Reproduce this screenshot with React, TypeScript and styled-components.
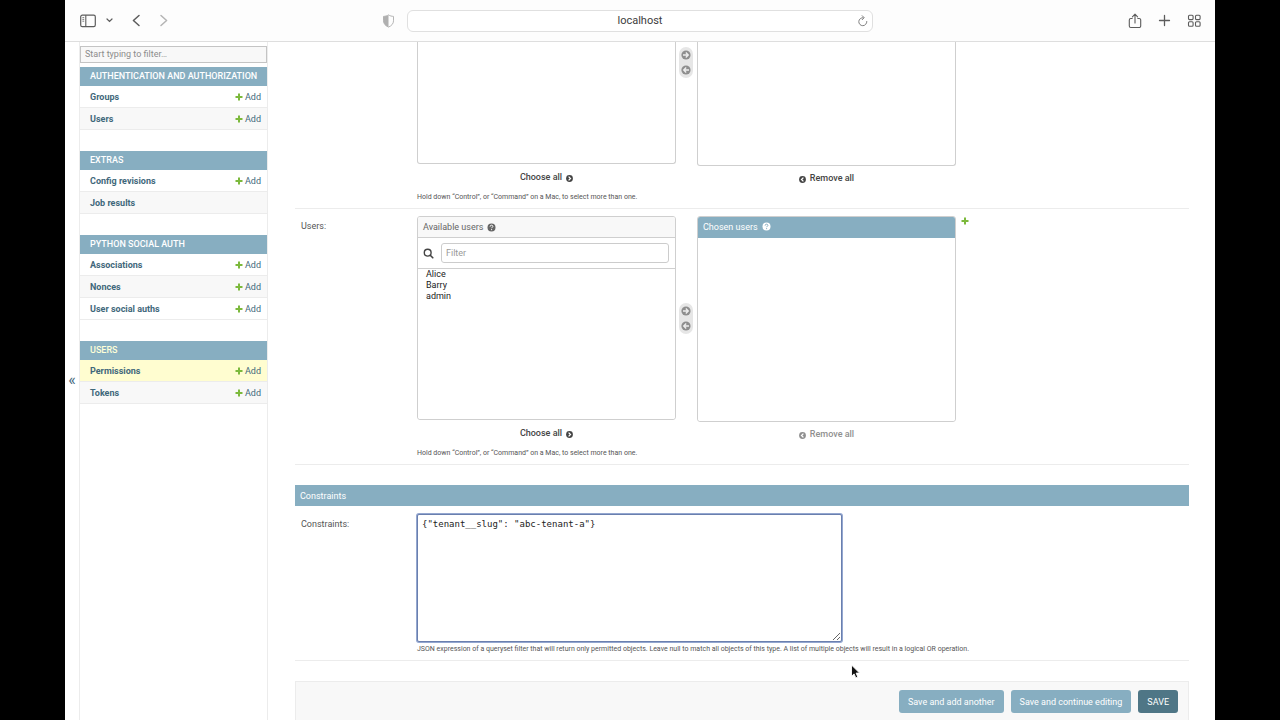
import React from "react";
import styled, { createGlobalStyle, css } from "styled-components";

const colors = {
  accent: "#87aec1",
  accentDark: "#4f7686",
  link: "#3f687b",
  text: "#555",
  line: "#ececec",
  boxLine: "#cfcfcf",
  shade: "#f8f8f8",
  green: "#7cb93c",
};

const GlobalStyle = createGlobalStyle`
  *, *::before, *::after { box-sizing: border-box; }
  html, body, #root { height: 100%; }
  body {
    margin: 0;
    background: #000;
    color: ${colors.text};
    font: 400 9px/12px Roboto, "Liberation Sans", sans-serif;
  }
  button, input, select, textarea { font: inherit; color: inherit; }
  svg { display: block; flex: none; }
`;

/* ---------- browser window ---------- */

const BrowserWindow = styled.div`
  position: relative;
  display: flex;
  flex-direction: column;
  height: 100vh;
  margin: 0 65px;
  background: #fff;
  overflow: hidden;
`;

const Toolbar = styled.header`
  display: grid;
  grid-template-columns: 1fr minmax(200px, 466px) 1fr;
  align-items: center;
  flex: none;
  height: 42px;
  background: #fdfdfd;
  border-bottom: 1px solid #dedede;
`;

const ToolbarSide = styled.div<{ $end?: boolean }>`
  display: flex;
  align-items: center;
  gap: ${(p) => (p.$end ? "16px" : "10px")};
  padding: ${(p) => (p.$end ? "0 14px 0 0" : "0 12px 0 15px")};
  justify-content: ${(p) => (p.$end ? "flex-end" : "flex-start")};
`;

const ToolButton = styled.button<{ $pushed?: boolean; $faint?: boolean }>`
  display: grid;
  place-items: center;
  padding: 0;
  border: 0;
  background: none;
  color: ${(p) => (p.$faint ? "#b4b4b4" : "#5c5c5c")};
  ${(p) => p.$pushed && css`margin-left: auto;`}
`;

const HistoryButtons = styled.div`
  display: flex;
  gap: 18px;
  margin-left: 8px;
`;

const AddressBar = styled.form`
  display: flex;
  align-items: center;
  height: 22px;
  padding: 0 4px 0 14px;
  border: 1px solid #e0e0e0;
  border-radius: 6px;
  background: #fff;
`;

const AddressInput = styled.input`
  flex: 1;
  min-width: 0;
  padding: 1px 0 0;
  border: 0;
  outline: 0;
  background: none;
  color: #3c3c3c;
  font-size: 11px;
  line-height: 20px;
  text-align: center;
`;

/* ---------- page frame ---------- */

const Page = styled.div`
  display: grid;
  grid-template-columns: 14px 189px 1fr;
  flex: 1;
  min-height: 0;
`;

const SidebarToggle = styled.button`
  align-self: center;
  padding: 0 0 4px;
  border: 0;
  background: none;
  color: ${colors.link};
  font-size: 16px;
  line-height: 16px;
`;

const Sidebar = styled.nav`
  padding-top: 4px;
  border: solid ${colors.line};
  border-width: 0 1px;
`;

const NavFilter = styled.input`
  display: block;
  width: 100%;
  height: 17px;
  margin-bottom: 4px;
  padding: 0 4px 1px;
  border: 1px solid #c4c4c4;
  border-radius: 0;
  background: ${colors.shade};
  &::placeholder { color: #8c8c8c; }
`;

const NavGroup = styled.section`
  margin-bottom: 21px;
`;

const NavHeading = styled.h2`
  margin: 0;
  padding: 0 10px;
  background: ${colors.accent};
  color: #fff;
  font-size: 9px;
  font-weight: 500;
  line-height: 19px;
  text-transform: uppercase;
  white-space: nowrap;
`;

const HeadingLink = styled.a<{ $current?: boolean }>`
  color: ${(p) => (p.$current ? "#ffffd8" : "#fff")};
  text-decoration: none;
`;

const NavList = styled.ul`
  margin: 0;
  padding: 0;
  list-style: none;
`;

const NavItem = styled.li<{ $active?: boolean }>`
  display: flex;
  align-items: center;
  justify-content: space-between;
  height: 22px;
  padding: 0 6px 0 10px;
  border-bottom: 1px solid ${colors.line};
  background: #fff;
  &:nth-child(even) { background: ${colors.shade}; }
  ${(p) => p.$active && css`background: #fffdd0;`}
`;

const NavLink = styled.a`
  color: ${colors.link};
  font-weight: 700;
  text-decoration: none;
`;

const AddLink = styled.a`
  display: flex;
  align-items: center;
  gap: 2px;
  color: ${colors.link};
  text-decoration: none;
`;

const Main = styled.main`
  display: flex;
  flex-direction: column;
  min-width: 0;
  padding: 0 26px 0 27px;
`;

/* ---------- form ---------- */

const FormRow = styled.div<{ $top: number }>`
  display: flex;
  align-items: flex-start;
  flex: none;
  padding: ${(p) => p.$top}px 0 5px 6px;
  border-bottom: 1px solid ${colors.line};
`;

const FieldLabel = styled.label`
  flex: none;
  width: 116px;
  padding-top: 4px;
`;

const Field = styled.div`
  min-width: 0;
`;

const Help = styled.p<{ $gap: number }>`
  margin: ${(p) => p.$gap}px 0 0;
  color: #555;
  font-size: 7px;
  line-height: 12px;
`;

const SelectorLine = styled.div`
  display: flex;
  gap: 5px;
`;

const Selector = styled.div`
  display: grid;
  grid-template-columns: 259px 21px 259px;
`;

const SelectorSide = styled.div`
  display: flex;
  flex-direction: column;
`;

const Box = styled.div<{ $height: number; $cut?: boolean }>`
  display: flex;
  flex-direction: column;
  height: ${(p) => p.$height}px;
  border: 1px solid ${colors.boxLine};
  border-radius: ${(p) => (p.$cut ? "0 0 3px 3px" : "3px")};
  ${(p) => p.$cut && css`border-top: 0;`}
  overflow: hidden;
`;

const BoxTitle = styled.h3<{ $chosen?: boolean }>`
  display: flex;
  align-items: center;
  gap: 4px;
  flex: none;
  height: 21px;
  margin: 0;
  padding: 0 5px;
  font-size: 9px;
  font-weight: 400;
  background: ${(p) => (p.$chosen ? colors.accent : colors.shade)};
  color: ${(p) => (p.$chosen ? "#fff" : "#666")};
  border-bottom: 1px solid ${(p) => (p.$chosen ? colors.accent : colors.boxLine)};
  ${(p) => p.$chosen && css`
    margin: -1px -1px 0;
    padding: 0 6px;
    height: 22px;
  `}
`;

const FilterLine = styled.div`
  display: flex;
  align-items: center;
  gap: 7px;
  flex: none;
  height: 31px;
  padding: 0 6px 0 5px;
  border-bottom: 1px solid ${colors.boxLine};
  color: #444;
`;

const FilterInput = styled.input`
  flex: 1;
  min-width: 0;
  height: 20px;
  padding: 0 4px;
  border: 1px solid #ccc;
  border-radius: 3px;
  &::placeholder { color: #999; }
`;

const OptionList = styled.select`
  flex: 1;
  width: 100%;
  min-height: 0;
  padding: 0 7px;
  border: 0;
  outline: 0;
  background: #fff;
  color: #222;
  overflow: hidden;
  option {
    min-height: 0;
    height: 11px;
    padding: 0 1px;
    line-height: 11px;
  }
`;

const SelectorAction = styled.button<{ $gap: number; $inactive?: boolean }>`
  display: flex;
  align-items: center;
  align-self: center;
  gap: 4px;
  height: 12px;
  margin-top: ${(p) => p.$gap}px;
  padding: 0;
  border: 0;
  background: none;
  font-weight: 500;
  color: ${(p) => (p.$inactive ? "#8f8f8f" : "#444")};
  svg { margin-top: 2px; }
`;

const Chooser = styled.div<{ $top: number }>`
  display: flex;
  flex-direction: column;
  align-items: center;
  align-self: start;
  gap: 5px;
  width: 14px;
  margin: ${(p) => p.$top}px 0 0 3px;
  padding: 3px 0;
  border-radius: 7px;
  background: #e6e6e6;
`;

const ChooserButton = styled.button`
  padding: 0;
  border: 0;
  background: none;
  color: #8e8e8e;
`;

const AddRelated = styled.a`
  padding-top: 1px;
`;

const ModuleTitle = styled.h2`
  flex: none;
  margin: 20px 0 0;
  padding: 1px 5px 0;
  background: ${colors.accent};
  color: #fff;
  font-size: 9px;
  font-weight: 400;
  line-height: 20px;
`;

const CodeArea = styled.textarea`
  display: block;
  width: 425px;
  max-width: 100%;
  height: 128px;
  padding: 3px 4px;
  border: 1px solid #6a7fae;
  border-radius: 2px;
  outline: 0;
  box-shadow: 0 0 0 1px #94a7d0;
  color: #222;
  font-family: "DejaVu Sans Mono", "Liberation Mono", monospace;
  line-height: 12px;
`;

const SubmitRow = styled.div`
  display: flex;
  justify-content: flex-end;
  flex: none;
  gap: 7px;
  margin-top: 20px;
  padding: 8px 10px;
  border: 1px solid ${colors.line};
  background: ${colors.shade};
`;

const SubmitButton = styled.button<{ $primary?: boolean }>`
  height: 23px;
  padding: 0 9px;
  border: 0;
  border-radius: 3px;
  background: ${(p) => (p.$primary ? colors.accentDark : colors.accent)};
  color: #fff;
`;

const Pointer = styled.svg`
  position: absolute;
  left: 785px;
  top: 664px;
`;

/* ---------- icons ---------- */

const PlusIcon = () => (
  <svg width="8" height="8" viewBox="0 0 8 8" fill={colors.green} aria-hidden="true">
    <path d="M3 0.5h2v2.5h2.5v2H5v2.5H3V5H.5V3H3z" />
  </svg>
);

const QuestionIcon = ({ mark }: { mark: string }) => (
  <svg width="9" height="9" viewBox="0 0 9 9" aria-hidden="true">
    <circle cx="4.5" cy="4.5" r="4" fill="currentColor" />
    <path d="M3.1 3.6c0-.9.6-1.4 1.4-1.4s1.4.5 1.4 1.2c0 .8-1.3.9-1.3 1.8" fill="none" stroke={mark} strokeWidth="1" />
    <circle cx="4.6" cy="6.6" r=".6" fill={mark} />
  </svg>
);

const SearchIcon = () => (
  <svg width="11" height="11" viewBox="0 0 11 11" fill="none" stroke="currentColor" aria-hidden="true">
    <circle cx="4.7" cy="4.7" r="3.4" strokeWidth="1.4" />
    <path d="M7.2 7.2l2.6 2.6" strokeWidth="1.6" strokeLinecap="round" />
  </svg>
);

const ArrowIcon = ({ left }: { left?: boolean }) => (
  <svg width="10" height="10" viewBox="0 0 10 10" aria-hidden="true">
    <circle cx="5" cy="5" r="4.6" fill="currentColor" />
    <path
      d={left ? "M8 5H3M5.2 2.5L2.7 5l2.5 2.5" : "M2 5h5M4.8 2.5L7.3 5 4.8 7.5"}
      fill="none"
      stroke="#eee"
      strokeWidth="1.3"
    />
  </svg>
);

const AngleIcon = ({ left }: { left?: boolean }) => (
  <svg width="7" height="7" viewBox="0 0 7 7" aria-hidden="true">
    <circle cx="3.5" cy="3.5" r="3.4" fill="currentColor" />
    <path
      d={left ? "M4.4 1.6L2.5 3.5l1.9 1.9" : "M2.6 1.6l1.9 1.9-1.9 1.9"}
      fill="none"
      stroke="#fff"
      strokeWidth="1.3"
    />
  </svg>
);

const SidebarIcon = () => (
  <svg width="16" height="14" viewBox="0 0 16 14" fill="none" stroke="currentColor" aria-hidden="true">
    <rect x=".7" y="1.2" width="14.6" height="11.4" rx="1.6" strokeWidth="1.2" />
    <path d="M5.8 1.2v11.4" strokeWidth="1.1" />
    <path d="M2.4 3.6h1.8M2.4 5.4h1.8M2.4 7.2h1.8" strokeWidth=".8" />
  </svg>
);

const ChevronIcon = () => (
  <svg width="7" height="5" viewBox="0 0 7 5" fill="none" stroke="currentColor" strokeWidth="1.2" aria-hidden="true">
    <path d="M1 1l2.5 2.5L6 1" strokeLinecap="round" />
  </svg>
);

const BackIcon = ({ forward }: { forward?: boolean }) => (
  <svg width="10" height="13" viewBox="0 0 10 13" fill="none" stroke="currentColor" strokeWidth="1.5" aria-hidden="true">
    <path d={forward ? "M2 1.5l5.6 5L2 11.5" : "M8 1.5l-5.6 5 5.6 5"} strokeLinecap="round" strokeLinejoin="round" />
  </svg>
);

const ShieldIcon = () => (
  <svg width="13" height="14" viewBox="0 0 13 14" aria-hidden="true">
    <path
      d="M6.5 .9C8 1.9 9.7 2.3 11.5 2.4v4.4c0 2.9-2 5-5 6.3-3-1.3-5-3.4-5-6.3V2.4C3.3 2.3 5 1.9 6.5.9z"
      fill="none"
      stroke="#b5b5b5"
    />
    <path d="M6.5 .9v12.2c-3-1.3-5-3.4-5-6.3V2.4C3.3 2.3 5 1.9 6.5.9z" fill="#b0b0b0" />
  </svg>
);

const ReloadIcon = () => (
  <svg width="10" height="12" viewBox="0 0 10 12" fill="none" stroke="#808080" aria-hidden="true">
    <path d="M8.8 6.5A4 4 0 1 1 5.2 2.7" strokeLinecap="round" />
    <path d="M4.2 .7l2 2-2 2" strokeLinecap="round" strokeLinejoin="round" />
  </svg>
);

const ShareIcon = () => (
  <svg width="14" height="16" viewBox="0 0 14 16" fill="none" stroke="currentColor" strokeWidth="1.1" aria-hidden="true">
    <path d="M4.6 5.5H2.8A1.5 1.5 0 0 0 1.3 7v6a1.5 1.5 0 0 0 1.5 1.5h8.4a1.5 1.5 0 0 0 1.5-1.5V7a1.5 1.5 0 0 0-1.5-1.5H9.4" />
    <path d="M7 10V1.4M4.4 3.8L7 1.2l2.6 2.6" strokeLinecap="round" strokeLinejoin="round" />
  </svg>
);

const NewTabIcon = () => (
  <svg width="13" height="13" viewBox="0 0 13 13" fill="none" stroke="currentColor" strokeWidth="1.3" aria-hidden="true">
    <path d="M6.5 1.5v10M1.5 6.5h10" strokeLinecap="round" />
  </svg>
);

const OverviewIcon = () => (
  <svg width="14" height="14" viewBox="0 0 14 14" fill="none" stroke="currentColor" strokeWidth="1.1" aria-hidden="true">
    <rect x="1.5" y="1.2" width="4.6" height="4.4" rx="1" />
    <rect x="8.5" y="1.2" width="4.6" height="4.4" rx="1" />
    <rect x="1.5" y="7.8" width="4.6" height="4.4" rx="1" />
    <rect x="8.5" y="7.8" width="4.6" height="4.4" rx="1" />
  </svg>
);

/* ---------- content ---------- */

type NavEntry = { name: string; add?: boolean; active?: boolean };

const navGroups: { title: string; current?: boolean; items: NavEntry[] }[] = [
  { title: "Authentication and Authorization", items: [{ name: "Groups", add: true }, { name: "Users", add: true }] },
  { title: "Extras", items: [{ name: "Config revisions", add: true }, { name: "Job results" }] },
  {
    title: "Python Social Auth",
    items: [
      { name: "Associations", add: true },
      { name: "Nonces", add: true },
      { name: "User social auths", add: true },
    ],
  },
  {
    title: "Users",
    current: true,
    items: [{ name: "Permissions", add: true, active: true }, { name: "Tokens", add: true }],
  },
];

const multiHelp = "Hold down “Control”, or “Command” on a Mac, to select more than one.";

const Choosers = ({ top }: { top: number }) => (
  <Chooser $top={top}>
    <ChooserButton type="button" aria-label="Choose">
      <ArrowIcon />
    </ChooserButton>
    <ChooserButton type="button" aria-label="Remove">
      <ArrowIcon left />
    </ChooserButton>
  </Chooser>
);

const ChooseAll = () => (
  <SelectorAction type="button" $gap={7}>
    Choose all <AngleIcon />
  </SelectorAction>
);

const RemoveAll = ({ inactive }: { inactive?: boolean }) => (
  <SelectorAction type="button" $gap={6} $inactive={inactive}>
    <AngleIcon left /> Remove all
  </SelectorAction>
);

export default function App() {
  return (
    <>
      <GlobalStyle />
      <BrowserWindow>
        <Toolbar>
          <ToolbarSide>
            <ToolButton type="button" aria-label="Show sidebar">
              <SidebarIcon />
            </ToolButton>
            <ToolButton type="button" aria-label="Tab groups">
              <ChevronIcon />
            </ToolButton>
            <HistoryButtons>
              <ToolButton type="button" aria-label="Back">
                <BackIcon />
              </ToolButton>
              <ToolButton type="button" aria-label="Forward" $faint>
                <BackIcon forward />
              </ToolButton>
            </HistoryButtons>
            <ToolButton type="button" aria-label="Privacy report" $pushed>
              <ShieldIcon />
            </ToolButton>
          </ToolbarSide>
          <AddressBar>
            <AddressInput aria-label="Address" defaultValue="localhost" />
            <ToolButton type="button" aria-label="Reload">
              <ReloadIcon />
            </ToolButton>
          </AddressBar>
          <ToolbarSide $end>
            <ToolButton type="button" aria-label="Share">
              <ShareIcon />
            </ToolButton>
            <ToolButton type="button" aria-label="New tab">
              <NewTabIcon />
            </ToolButton>
            <ToolButton type="button" aria-label="Tab overview">
              <OverviewIcon />
            </ToolButton>
          </ToolbarSide>
        </Toolbar>

        <Page>
          <SidebarToggle type="button" aria-label="Toggle navigation">
            «
          </SidebarToggle>
          <Sidebar>
            <NavFilter type="search" aria-label="Filter navigation items" placeholder="Start typing to filter…" />
            {navGroups.map((group) => (
              <NavGroup key={group.title}>
                <NavHeading>
                  <HeadingLink href="#" $current={group.current}>
                    {group.title}
                  </HeadingLink>
                </NavHeading>
                <NavList>
                  {group.items.map((item) => (
                    <NavItem key={item.name} $active={item.active}>
                      <NavLink href="#">{item.name}</NavLink>
                      {item.add && (
                        <AddLink href="#">
                          <PlusIcon /> Add
                        </AddLink>
                      )}
                    </NavItem>
                  ))}
                </NavList>
              </NavGroup>
            ))}
          </Sidebar>

          <Main>
            <FormRow $top={0}>
              <FieldLabel as="span" />
              <Field>
                <Selector>
                  <SelectorSide>
                    <Box $height={122} $cut />
                    <ChooseAll />
                  </SelectorSide>
                  <Choosers top={5} />
                  <SelectorSide>
                    <Box $height={124} $cut />
                    <RemoveAll />
                  </SelectorSide>
                </Selector>
                <Help $gap={7}>{multiHelp}</Help>
              </Field>
            </FormRow>

            <FormRow $top={7}>
              <FieldLabel htmlFor="users-from">Users:</FieldLabel>
              <Field>
                <SelectorLine>
                  <Selector>
                    <SelectorSide>
                      <Box $height={204}>
                        <BoxTitle>
                          Available users <QuestionIcon mark="#fff" />
                        </BoxTitle>
                        <FilterLine>
                          <SearchIcon />
                          <FilterInput aria-label="Filter available users" placeholder="Filter" />
                        </FilterLine>
                        <OptionList id="users-from" multiple>
                          <option>Alice</option>
                          <option>Barry</option>
                          <option>admin</option>
                        </OptionList>
                      </Box>
                      <ChooseAll />
                    </SelectorSide>
                    <Choosers top={87} />
                    <SelectorSide>
                      <Box $height={206}>
                        <BoxTitle $chosen>
                          Chosen users <QuestionIcon mark={colors.accent} />
                        </BoxTitle>
                        <OptionList aria-label="Chosen users" multiple />
                      </Box>
                      <RemoveAll inactive />
                    </SelectorSide>
                  </Selector>
                  <AddRelated href="#" aria-label="Add another user">
                    <PlusIcon />
                  </AddRelated>
                </SelectorLine>
                <Help $gap={7}>{multiHelp}</Help>
              </Field>
            </FormRow>

            <ModuleTitle>Constraints</ModuleTitle>
            <FormRow $top={8}>
              <FieldLabel htmlFor="constraints">Constraints:</FieldLabel>
              <Field>
                <CodeArea id="constraints" spellCheck={false} defaultValue={'{"tenant__slug": "abc-tenant-a"}'} />
                <Help $gap={1}>
                  JSON expression of a queryset filter that will return only permitted objects. Leave null to match all
                  objects of this type. A list of multiple objects will result in a logical OR operation.
                </Help>
              </Field>
            </FormRow>

            <SubmitRow>
              <SubmitButton type="submit">Save and add another</SubmitButton>
              <SubmitButton type="submit">Save and continue editing</SubmitButton>
              <SubmitButton type="submit" $primary>
                SAVE
              </SubmitButton>
            </SubmitRow>
          </Main>
        </Page>

        <Pointer width="10" height="16" viewBox="0 0 10 16" aria-hidden="true">
          <path
            d="M1.5 1v11.3l2.6-2.4 1.7 4 2-.9-1.7-3.9h3.5z"
            fill="#111"
            stroke="#fff"
            strokeWidth=".9"
            strokeLinejoin="round"
          />
        </Pointer>
      </BrowserWindow>
    </>
  );
}
